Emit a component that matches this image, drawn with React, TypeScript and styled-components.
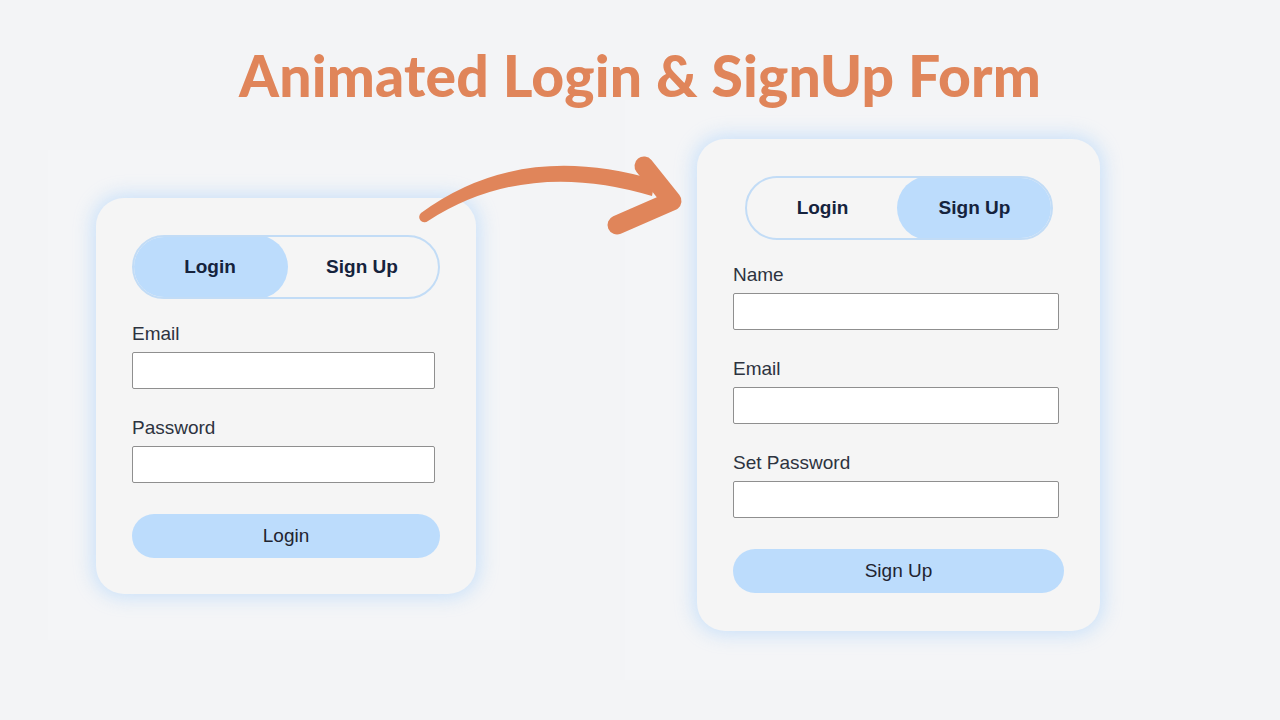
import React from 'react'
import styled, { createGlobalStyle } from 'styled-components'

const GlobalStyle = createGlobalStyle`
  html, body {
    margin: 0;
    padding: 0;
    background: #f3f4f6;
    font-family: "Liberation Sans", Arial, sans-serif;
  }
`

const Page = styled.div`
  position: relative;
  width: 1280px;
  height: 720px;
  overflow: hidden;
  background: #f3f4f6;
`

const Title = styled.h1`
  position: relative;
  z-index: 1;
  margin: 0;
  padding-top: 40px;
  height: 60px;
  text-align: center;
  font-family: Lato, "Open Sans", sans-serif;
  font-weight: 900;
  font-size: 57px;
  line-height: 70px;
  color: #e0855a;
  letter-spacing: 0.2px;
`

const Stage = styled.div`
  display: flex;
  align-items: flex-start;
  gap: 105px;
  padding-left: 48px;
`

const Frame = styled.div<{ $pad: string; $top: number }>`
  padding: ${(p) => p.$pad};
  margin-top: ${(p) => p.$top}px;
  background: #f4f5f7;
`

const Card = styled.div<{ $width: number; $bottom: number }>`
  box-sizing: border-box;
  display: flex;
  flex-direction: column;
  width: ${(p) => p.$width}px;
  padding: 37px 36px ${(p) => p.$bottom}px;
  background: #f5f5f5;
  border-radius: 28px;
  box-shadow: 0 0 18px 4px rgba(190, 219, 250, 0.75);
`

const Toggle = styled.div`
  box-sizing: border-box;
  display: flex;
  width: 308px;
  height: 64px;
  margin: 0 auto 23px;
  border: 2px solid #c2dcf6;
  border-radius: 32px;
  overflow: hidden;
`

const Tab = styled.div<{ $active?: boolean }>`
  flex: 1;
  display: flex;
  align-items: center;
  justify-content: center;
  margin: -2px;
  border-radius: 32px;
  background: ${(p) => (p.$active ? '#bcdcfc' : 'transparent')};
  font-weight: 700;
  font-size: 19px;
  color: #15233d;
`

const Field = styled.div`
  display: flex;
  flex-direction: column;
  margin-bottom: 27px;
`

const Label = styled.label`
  font-size: 19px;
  line-height: 23px;
  color: #2d3340;
  margin-bottom: 7px;
`

const Input = styled.input`
  box-sizing: border-box;
  width: 98.4%;
  height: 37px;
  border: 1px solid #8f8f8f;
  border-radius: 2px;
  background: #fff;
  font-size: 16px;
  padding: 0 8px;
`

const Submit = styled.button`
  display: block;
  width: 100%;
  height: 44px;
  margin-top: 4px;
  border: none;
  border-radius: 22px;
  background: #bcdcfc;
  font-family: "Liberation Sans", Arial, sans-serif;
  font-size: 19px;
  color: #1f2430;
`

const ArrowBox = styled.svg`
  position: absolute;
  left: 0;
  top: 0;
  pointer-events: none;
`

function Arrow() {
  return (
    <ArrowBox width="1280" height="720" viewBox="0 0 1280 720">
      <path
        d="M421 213 Q520 140 655 180 L652 196 Q525 158 428 221 A5 5 0 0 1 421 213 Z"
        fill="#e0855a"
      />
      <path
        d="M644 166 L672 201 L617 225"
        fill="none"
        stroke="#e0855a"
        strokeWidth="19"
        strokeLinecap="round"
        strokeLinejoin="round"
      />
    </ArrowBox>
  )
}

export default function App() {
  return (
    <>
      <GlobalStyle />
      <Page>
        <Title>Animated Login &amp; SignUp Form</Title>
        <Stage>
          <Frame $pad="48px 44px 46px 48px" $top={50}>
            <Card $width={380} $bottom={36}>
              <Toggle>
                <Tab $active>Login</Tab>
                <Tab>Sign Up</Tab>
              </Toggle>
              <Field>
                <Label>Email</Label>
                <Input type="email" />
              </Field>
              <Field>
                <Label>Password</Label>
                <Input type="password" />
              </Field>
              <Submit>Login</Submit>
            </Card>
          </Frame>
          <Frame $pad="39px 50px 49px 72px" $top={0}>
            <Card $width={403} $bottom={38}>
              <Toggle>
                <Tab>Login</Tab>
                <Tab $active>Sign Up</Tab>
              </Toggle>
              <Field>
                <Label>Name</Label>
                <Input type="text" />
              </Field>
              <Field>
                <Label>Email</Label>
                <Input type="email" />
              </Field>
              <Field>
                <Label>Set Password</Label>
                <Input type="password" />
              </Field>
              <Submit>Sign Up</Submit>
            </Card>
          </Frame>
        </Stage>
        <Arrow />
      </Page>
    </>
  )
}
